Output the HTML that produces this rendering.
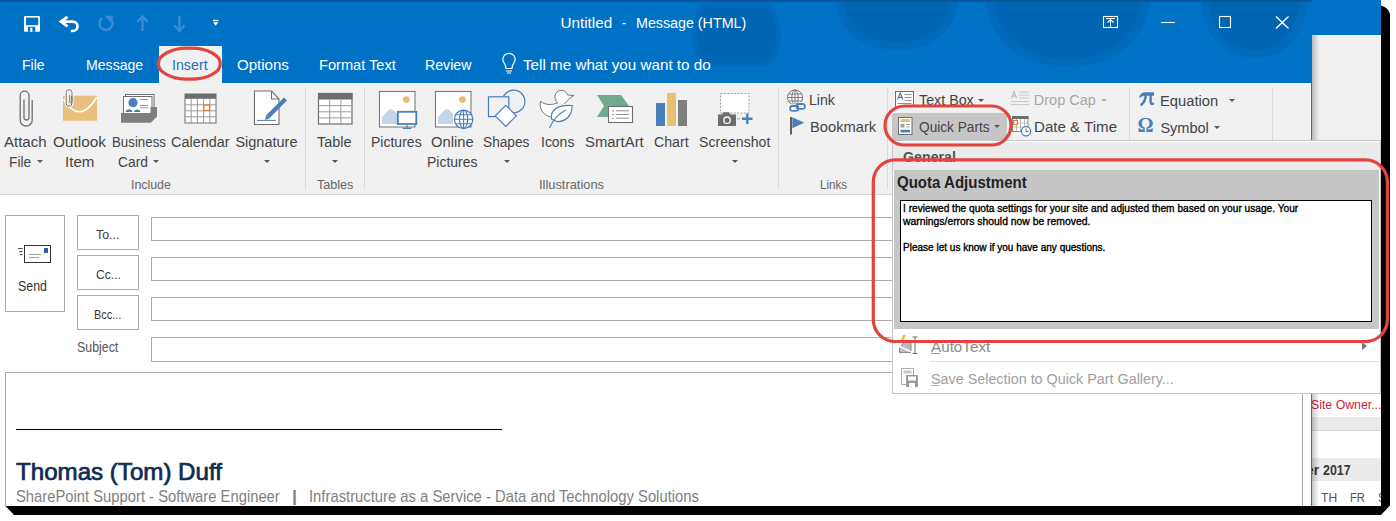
<!DOCTYPE html>
<html><head><meta charset="utf-8"><style>
html,body{margin:0;padding:0;width:1396px;height:521px;overflow:hidden;background:#fff}
.t{position:absolute;white-space:nowrap;font-family:"Liberation Sans",sans-serif;transform-origin:0 0}
.r{position:absolute;display:block}
</style></head><body>
<div class="r" style="left:0px;top:0px;width:1396px;height:521px;background:#fff"></div>
<svg class="r" style="left:0px;top:0px" width="1396" height="521" viewBox="0 0 1396 521"><path d="M1381 5.8 C1385 6.5 1388.5 9 1390 14 L1390 505.5 L1381 515 L14 515 L5.5 506 L1381 506 Z" fill="#000"/></svg>
<div class="r" style="left:1311px;top:0px;width:70px;height:506px;background:#fff"></div>
<div class="r" style="left:1311px;top:0px;width:70px;height:35px;background:#0072c6"></div>
<div class="r" style="left:1311px;top:35px;width:70px;height:106px;background:#f0f0f0"></div>
<div class="r" style="left:0px;top:0px;width:1312px;height:83px;background:#0072c6"></div>
<svg class="r" style="left:0px;top:0px" width="1311" height="83" viewBox="0 0 1311 83"><path d="M835 0 H959 C955.28 30.0 934.2 50 897.0 50 C859.8 50 838.72 30.0 835 0 Z" fill="#006abb"/><path d="M843 0 H951 C947.76 25.2 929.4 42 897.0 42 C864.6 42 846.24 25.2 843 0 Z" fill="#0065b3"/><path d="M985 0 H1150 C1145.05 40.199999999999996 1117.0 67 1067.5 67 C1018.0 67 989.95 40.199999999999996 985 0 Z" fill="#006abb"/><path d="M993 0 H1142 C1137.53 35.4 1112.2 59 1067.5 59 C1022.8 59 997.47 35.4 993 0 Z" fill="#0065b3"/><path d="M1201 0 H1308 C1304.79 34.8 1286.6 58 1254.5 58 C1222.4 58 1204.21 34.8 1201 0 Z" fill="#006abb"/><path d="M1209 0 H1300 C1297.27 30.0 1281.8 50 1254.5 50 C1227.2 50 1211.73 30.0 1209 0 Z" fill="#0065b3"/><path d="M705 3 H768 C776 8 781 20 781 35 C781 52 775 66 765 67 H708 C698 66 692 52 692 35 C692 20 697 8 705 3 Z" fill="#006abb"/><path d="M710 6 H764 C772 10 776 20 776 35 C776 50 771 62 762 63 H711 C702 62 697 50 697 35 C697 20 701 10 710 6 Z" fill="#0065b3"/></svg>
<div class="r" style="left:0px;top:0px;width:1312px;height:2px;background:#0b5698"></div>
<div class="t" style="left:560.50px;top:15.38px;font-size:15.26px;line-height:15.26px;color:#fff;">Untitled</div>
<div class="t" style="left:621.90px;top:15.38px;font-size:15.26px;line-height:15.26px;color:#fff;transform:scaleX(0.8067);">-</div>
<div class="t" style="left:635.70px;top:15.38px;font-size:15.26px;line-height:15.26px;color:#fff;transform:scaleX(0.9357);">Message (HTML)</div>
<div class="r" style="left:159px;top:46px;width:63px;height:37px;background:#f1f1f1"></div>
<div class="t" style="left:22.30px;top:57.06px;font-size:15.41px;line-height:15.41px;color:#fff;transform:scaleX(0.9146);">File</div>
<div class="t" style="left:85.50px;top:57.06px;font-size:15.41px;line-height:15.41px;color:#fff;transform:scaleX(0.9149);">Message</div>
<div class="t" style="left:236.80px;top:57.06px;font-size:15.41px;line-height:15.41px;color:#fff;transform:scaleX(0.9775);">Options</div>
<div class="t" style="left:318.60px;top:57.06px;font-size:15.41px;line-height:15.41px;color:#fff;transform:scaleX(0.9475);">Format Text</div>
<div class="t" style="left:425.20px;top:57.06px;font-size:15.41px;line-height:15.41px;color:#fff;transform:scaleX(0.9176);">Review</div>
<div class="t" style="left:522.60px;top:57.06px;font-size:15.41px;line-height:15.41px;color:#fff;transform:scaleX(0.9873);">Tell me what you want to do</div>
<div class="t" style="left:172.40px;top:57.06px;font-size:15.41px;line-height:15.41px;color:#1f6fc5;transform:scaleX(0.9239);">Insert</div>
<div class="r" style="left:0px;top:83px;width:1311px;height:111px;background:#f1f1f1"></div>
<div class="r" style="left:0px;top:194px;width:1311px;height:1px;background:#d5d5d5"></div>
<div class="r" style="left:1311px;top:83px;width:1px;height:423px;background:#1e78d0"></div>
<div class="r" style="left:305px;top:87px;width:1px;height:102px;background:#d9d9d9"></div>
<div class="r" style="left:364px;top:87px;width:1px;height:102px;background:#d9d9d9"></div>
<div class="r" style="left:778px;top:87px;width:1px;height:102px;background:#d9d9d9"></div>
<div class="r" style="left:887px;top:87px;width:1px;height:102px;background:#d9d9d9"></div>
<div class="r" style="left:1129px;top:87px;width:1px;height:102px;background:#d9d9d9"></div>
<div class="r" style="left:1272px;top:87px;width:1px;height:102px;background:#d9d9d9"></div>
<div class="t" style="left:4.10px;top:134.70px;font-size:14.53px;line-height:14.53px;color:#444;transform:scaleX(1.0338);">Attach</div>
<div class="t" style="left:53.40px;top:134.70px;font-size:14.53px;line-height:14.53px;color:#444;transform:scaleX(1.0575);">Outlook</div>
<div class="t" style="left:111.70px;top:134.70px;font-size:14.53px;line-height:14.53px;color:#444;transform:scaleX(0.9155);">Business</div>
<div class="t" style="left:171.10px;top:134.70px;font-size:14.53px;line-height:14.53px;color:#444;transform:scaleX(0.9935);">Calendar</div>
<div class="t" style="left:235.40px;top:134.70px;font-size:14.53px;line-height:14.53px;color:#444;">Signature</div>
<div class="t" style="left:317.30px;top:134.70px;font-size:14.53px;line-height:14.53px;color:#444;transform:scaleX(0.9927);">Table</div>
<div class="t" style="left:371.00px;top:134.70px;font-size:14.53px;line-height:14.53px;color:#444;transform:scaleX(0.9657);">Pictures</div>
<div class="t" style="left:431.30px;top:134.70px;font-size:14.53px;line-height:14.53px;color:#444;transform:scaleX(1.0162);">Online</div>
<div class="t" style="left:483.20px;top:134.70px;font-size:14.53px;line-height:14.53px;color:#444;transform:scaleX(0.9432);">Shapes</div>
<div class="t" style="left:541.20px;top:134.70px;font-size:14.53px;line-height:14.53px;color:#444;transform:scaleX(0.9615);">Icons</div>
<div class="t" style="left:585.00px;top:134.70px;font-size:14.53px;line-height:14.53px;color:#444;transform:scaleX(1.0255);">SmartArt</div>
<div class="t" style="left:654.20px;top:134.70px;font-size:14.53px;line-height:14.53px;color:#444;transform:scaleX(0.9736);">Chart</div>
<div class="t" style="left:699.40px;top:134.70px;font-size:14.53px;line-height:14.53px;color:#444;transform:scaleX(0.9710);">Screenshot</div>
<div class="t" style="left:9.20px;top:154.80px;font-size:14.53px;line-height:14.53px;color:#444;transform:scaleX(0.9524);">File</div>
<div class="t" style="left:65.00px;top:154.80px;font-size:14.53px;line-height:14.53px;color:#444;transform:scaleX(1.0400);">Item</div>
<div class="t" style="left:118.40px;top:154.80px;font-size:14.53px;line-height:14.53px;color:#444;transform:scaleX(0.9520);">Card</div>
<div class="t" style="left:427.40px;top:154.80px;font-size:14.53px;line-height:14.53px;color:#444;transform:scaleX(0.9619);">Pictures</div>
<svg class="r" style="left:36.5px;top:160.4px" width="6" height="3" viewBox="0 0 6 3"><path d="M0 0H6 L3.0 3Z" fill="#555"/></svg>
<svg class="r" style="left:153.0px;top:160.4px" width="6" height="3" viewBox="0 0 6 3"><path d="M0 0H6 L3.0 3Z" fill="#555"/></svg>
<svg class="r" style="left:264.0px;top:160.4px" width="6" height="3" viewBox="0 0 6 3"><path d="M0 0H6 L3.0 3Z" fill="#555"/></svg>
<svg class="r" style="left:332.0px;top:160.4px" width="6" height="3" viewBox="0 0 6 3"><path d="M0 0H6 L3.0 3Z" fill="#555"/></svg>
<svg class="r" style="left:504.0px;top:160.4px" width="6" height="3" viewBox="0 0 6 3"><path d="M0 0H6 L3.0 3Z" fill="#555"/></svg>
<svg class="r" style="left:732.0px;top:160.4px" width="6" height="3" viewBox="0 0 6 3"><path d="M0 0H6 L3.0 3Z" fill="#555"/></svg>
<div class="t" style="left:130.50px;top:178.00px;font-size:13.23px;line-height:13.23px;color:#666;transform:scaleX(0.9354);">Include</div>
<div class="t" style="left:316.60px;top:178.00px;font-size:13.23px;line-height:13.23px;color:#666;transform:scaleX(0.9519);">Tables</div>
<div class="t" style="left:538.50px;top:178.00px;font-size:13.23px;line-height:13.23px;color:#666;transform:scaleX(0.9716);">Illustrations</div>
<div class="t" style="left:819.60px;top:178.00px;font-size:13.23px;line-height:13.23px;color:#666;transform:scaleX(0.8746);">Links</div>
<div class="r" style="left:892px;top:113px;width:115px;height:28px;background:#c6c6c6;border-radius:3px"></div>
<div class="t" style="left:809.30px;top:93.10px;font-size:14.53px;line-height:14.53px;color:#444;transform:scaleX(0.9743);">Link</div>
<div class="t" style="left:809.70px;top:120.00px;font-size:14.53px;line-height:14.53px;color:#444;transform:scaleX(1.0128);">Bookmark</div>
<div class="t" style="left:918.80px;top:92.70px;font-size:14.53px;line-height:14.53px;color:#444;transform:scaleX(0.9831);">Text Box</div>
<svg class="r" style="left:978.0px;top:98.8px" width="6" height="3" viewBox="0 0 6 3"><path d="M0 0H6 L3.0 3Z" fill="#555"/></svg>
<div class="t" style="left:918.80px;top:119.80px;font-size:14.53px;line-height:14.53px;color:#444;transform:scaleX(0.9412);">Quick Parts</div>
<svg class="r" style="left:994.0px;top:124.9px" width="6" height="3" viewBox="0 0 6 3"><path d="M0 0H6 L3.0 3Z" fill="#555"/></svg>
<div class="t" style="left:1033.80px;top:92.70px;font-size:14.53px;line-height:14.53px;color:#a6a6a6;">Drop Cap</div>
<svg class="r" style="left:1101.0px;top:98.8px" width="6" height="3" viewBox="0 0 6 3"><path d="M0 0H6 L3.0 3Z" fill="#b0b0b0"/></svg>
<div class="t" style="left:1033.80px;top:119.80px;font-size:14.53px;line-height:14.53px;color:#444;transform:scaleX(1.0404);">Date &amp; Time</div>
<div class="t" style="left:1160.40px;top:93.70px;font-size:14.53px;line-height:14.53px;color:#444;transform:scaleX(1.0160);">Equation</div>
<svg class="r" style="left:1229.0px;top:98.8px" width="6" height="3" viewBox="0 0 6 3"><path d="M0 0H6 L3.0 3Z" fill="#555"/></svg>
<div class="t" style="left:1160.40px;top:120.60px;font-size:14.53px;line-height:14.53px;color:#444;">Symbol</div>
<svg class="r" style="left:1214.0px;top:125.6px" width="6" height="3" viewBox="0 0 6 3"><path d="M0 0H6 L3.0 3Z" fill="#555"/></svg>
<div class="r" style="left:5px;top:215px;width:60px;height:97px;background:#fff;border:1px solid #ababab;box-sizing:border-box"></div>
<div class="t" style="left:18.00px;top:279.00px;font-size:14.53px;line-height:14.53px;color:#333;transform:scaleX(0.8545);">Send</div>
<div class="r" style="left:77px;top:215px;width:62px;height:35px;background:#fff;border:1px solid #ababab;box-sizing:border-box"></div>
<div class="r" style="left:77px;top:255px;width:62px;height:35px;background:#fff;border:1px solid #ababab;box-sizing:border-box"></div>
<div class="r" style="left:77px;top:295px;width:62px;height:35px;background:#fff;border:1px solid #ababab;box-sizing:border-box"></div>
<div class="t" style="left:96.30px;top:227.90px;font-size:13.23px;line-height:13.23px;color:#3a3a3a;transform:scaleX(0.9361);">To...</div>
<div class="t" style="left:95.50px;top:267.90px;font-size:13.23px;line-height:13.23px;color:#3a3a3a;transform:scaleX(0.9193);">Cc...</div>
<div class="t" style="left:94.20px;top:307.70px;font-size:13.23px;line-height:13.23px;color:#3a3a3a;transform:scaleX(0.8256);">Bcc...</div>
<div class="t" style="left:77.30px;top:340.81px;font-size:13.81px;line-height:13.81px;color:#555;transform:scaleX(0.8968);">Subject</div>
<div class="r" style="left:151px;top:217px;width:1160px;height:24px;border:1px solid #ababab;box-sizing:border-box;background:#fff"></div>
<div class="r" style="left:151px;top:257px;width:1160px;height:24px;border:1px solid #ababab;box-sizing:border-box;background:#fff"></div>
<div class="r" style="left:151px;top:297px;width:1160px;height:24px;border:1px solid #ababab;box-sizing:border-box;background:#fff"></div>
<div class="r" style="left:151px;top:337px;width:1160px;height:25px;border:1px solid #ababab;box-sizing:border-box;background:#fff"></div>
<div class="r" style="left:5px;top:372px;width:1298px;height:134px;border:1px solid #ababab;border-bottom:none;box-sizing:border-box;background:#fff"></div>
<div class="r" style="left:16px;top:429px;width:486px;height:1px;background:#000"></div>
<div class="t" style="left:16.00px;top:460.81px;font-size:23.26px;line-height:23.26px;color:#0f2d52;transform:scaleX(1.0371);-webkit-text-stroke:0.7px #0f2d52;">Thomas (Tom) Duff</div>
<div class="t" style="left:16.00px;top:489.17px;font-size:15.99px;line-height:15.99px;color:#7f7f7f;transform:scaleX(0.9247);">SharePoint Support - Software Engineer</div>
<div class="t" style="left:292.00px;top:489.17px;font-size:15.99px;line-height:15.99px;color:#7f7f7f;font-weight:bold;transform:scaleX(1.1169);">|</div>
<div class="t" style="left:309.00px;top:489.17px;font-size:15.99px;line-height:15.99px;color:#7f7f7f;transform:scaleX(0.9265);">Infrastructure as a Service - Data and Technology Solutions</div>
<div class="r" style="left:0;top:0;width:1396px;height:521px;clip-path:inset(0px 15px 15px 1312px)">
<div class="r" style="left:1311px;top:417px;width:70px;height:14px;background:#ebebeb;border-bottom:1px solid #d6d6d6;box-sizing:border-box"></div>
<div class="r" style="left:1311px;top:458px;width:70px;height:23px;background:#ebebeb"></div>
<div class="t" style="left:1310.50px;top:397.93px;font-size:13.66px;line-height:13.66px;color:#c81f3c;transform:scaleX(0.9013);">Site Owner...</div>
<div class="t" style="left:1306.00px;top:463.34px;font-size:14.24px;line-height:14.24px;color:#3a3a3a;font-weight:bold;transform:scaleX(0.9658);">er</div>
<div class="t" style="left:1323.30px;top:463.34px;font-size:14.24px;line-height:14.24px;color:#3a3a3a;font-weight:bold;transform:scaleX(0.8740);">2017</div>
<div class="t" style="left:1321.40px;top:491.23px;font-size:13.08px;line-height:13.08px;color:#555;transform:scaleX(0.9233);">TH</div>
<div class="t" style="left:1350.40px;top:491.23px;font-size:13.08px;line-height:13.08px;color:#555;transform:scaleX(0.8602);">FR</div>
<div class="t" style="left:1377.60px;top:491.23px;font-size:13.08px;line-height:13.08px;color:#555;transform:scaleX(0.8481);">S</div>
</div>
<div class="r" style="left:1312px;top:35px;width:7px;height:471px;background:linear-gradient(90deg,rgba(0,0,0,.22),rgba(0,0,0,0))"></div>
<div class="r" style="left:1311px;top:394px;width:1px;height:112px;background:#1e78d0"></div>
<div class="r" style="left:892px;top:140px;width:489px;height:254px;background:#fff;border:1px solid #c6c6c6;box-sizing:border-box"></div>
<div class="r" style="left:893px;top:142px;width:487px;height:28px;background:#ebebeb"></div>
<div class="t" style="left:903.30px;top:150.81px;font-size:13.81px;line-height:13.81px;color:#4e5561;font-weight:bold;transform:scaleX(1.0307);">General</div>
<div class="r" style="left:894px;top:170px;width:485px;height:159px;background:#c6c6c6"></div>
<div class="t" style="left:897.00px;top:174.87px;font-size:15.99px;line-height:15.99px;color:#222;font-weight:bold;transform:scaleX(0.9401);">Quota Adjustment</div>
<div class="r" style="left:900px;top:200px;width:472px;height:122px;background:#fff;border:1px solid #000;box-sizing:border-box"></div>
<div class="t" style="left:902.50px;top:204.16px;font-size:10.32px;line-height:10.32px;color:#000;transform:scaleX(0.9849);-webkit-text-stroke:0.35px #000;">I reviewed the quota settings for your site and adjusted them based on your usage. Your</div>
<div class="t" style="left:902.52px;top:216.56px;font-size:10.32px;line-height:10.32px;color:#000;transform:scaleX(1.0056);-webkit-text-stroke:0.35px #000;">warnings/errors should now be removed.</div>
<div class="t" style="left:902.50px;top:242.56px;font-size:10.32px;line-height:10.32px;color:#000;transform:scaleX(0.9724);-webkit-text-stroke:0.35px #000;">Please let us know if you have any questions.</div>
<div class="t" style="left:931.40px;top:340.81px;font-size:13.81px;line-height:13.81px;color:#8a8a8a;transform:scaleX(1.1037);">AutoText</div>
<div class="r" style="left:930px;top:361px;width:449px;height:1px;background:#e1e1e1"></div>
<div class="r" style="left:931px;top:353px;width:9px;height:1px;background:#9a9a9a"></div>
<div class="r" style="left:931px;top:385px;width:8px;height:1px;background:#b0b0b0"></div>
<div class="t" style="left:931.40px;top:373.31px;font-size:13.81px;line-height:13.81px;color:#a0a0a0;transform:scaleX(1.0393);">Save Selection to Quick Part Gallery...</div>
<svg class="r" style="left:1362px;top:342px" width="5" height="8" viewBox="0 0 5 8"><path d="M0 0L5 4L0 8Z" fill="#777"/></svg>
<svg class="r" style="left:0px;top:0px" width="1396" height="521" viewBox="0 0 1396 521">
<g id="qat">
<rect x="24" y="16" width="16" height="15.8" rx="1.2" fill="#fff"/>
<rect x="26" y="17.6" width="12.2" height="7.6" fill="#0072c6"/>
<rect x="28" y="26.8" width="7.2" height="5" fill="#0072c6"/>
<rect x="30.2" y="27.8" width="2.2" height="4" fill="#fff"/>
<path d="M62 21.6 H72.8 A4.7 4.7 0 0 1 72.8 31 H70.8" stroke="#fff" stroke-width="2.6" fill="none"/>
<path d="M67.5 16.8 L61 21.6 L67.5 26.4" stroke="#fff" stroke-width="2.8" fill="none" stroke-linejoin="miter"/>
<path d="M110.5 18.6 A6.6 6.6 0 1 1 102 18.2" stroke="#3a8ad6" stroke-width="2.4" fill="none"/>
<path d="M104.5 15.5 L113.6 16.2 L110.4 22.6 Z" fill="#3a8ad6"/>
<path d="M142.5 17.5 V31 M137.3 22 L142.5 16.4 L147.7 22" stroke="#3a8ad6" stroke-width="2.4" fill="none"/>
<path d="M179.4 16 V29.6 M174.2 25.2 L179.4 30.8 L184.6 25.2" stroke="#3a8ad6" stroke-width="2.4" fill="none"/>
<rect x="213" y="19.8" width="5.3" height="1.3" fill="#fff"/>
<path d="M213 22.2 H218.3 L215.65 25.8 Z" fill="#fff"/>
</g>
<g id="titlebtns" stroke="#fff" fill="none" stroke-width="1.1">
<rect x="1103.5" y="16.5" width="14" height="11"/>
<path d="M1110.5 27.5 V19.5 M1107.5 22.5 L1110.5 19.5 L1113.5 22.5 M1106 18.5 H1115"/>
<path d="M1161 22.5 H1175"/>
<rect x="1219.5" y="16.5" width="11" height="11"/>
<path d="M1276 16.5 L1288.5 28.5 M1288.5 16.5 L1276 28.5" stroke-width="1.3"/>
</g>
<g id="bulb" stroke="#fff" fill="none" stroke-width="1.2">
<path d="M506 68.5 C506 64 502.8 62.5 502.8 59.5 A6.2 6.2 0 0 1 515.2 59.5 C515.2 62.5 512 64 512 68.5 Z"/>
<path d="M506 71 H512 M507 73 H511"/>
</g>
<g id="include">
<path d="M32.2 100 V120 A6 6 0 0 1 20.2 120 V95.5 A4.4 4.4 0 0 1 29 95.5 V117.5 A2.5 2.5 0 0 1 24 117.5 V99.5" stroke="#6f6f6f" stroke-width="1.3" fill="none"/>
<rect x="63" y="95.7" width="34" height="25.1" fill="#e8bf7e"/>
<path d="M63.5 99.5 Q80 125 96.5 97.5" stroke="#fff" stroke-width="1.6" fill="none"/>
<path d="M71.8 96 V103.5 A2.8 2.8 0 0 1 66.2 103.5 V92.5 A2.9 2.9 0 0 1 72 92.5 V102 A1.1 1.1 0 0 1 69.8 102 V95" stroke="#fff" stroke-width="3" fill="none"/>
<path d="M71.8 96 V103.5 A2.8 2.8 0 0 1 66.2 103.5 V92.5 A2.9 2.9 0 0 1 72 92.5 V102 A1.1 1.1 0 0 1 69.8 102 V95" stroke="#6f6f6f" stroke-width="1" fill="none"/>
<rect x="125.5" y="94.5" width="28.5" height="18" fill="#fff" stroke="#6f6f6f" stroke-width="1"/>
<rect x="123.5" y="96.5" width="28.5" height="18" fill="#fff" stroke="#6f6f6f" stroke-width="1"/>
<circle cx="133" cy="102.7" r="4.6" fill="#4a7ebb"/>
<path d="M125.5 112 A3.6 3.6 0 0 1 132.5 112 Z M133.8 112 A3.6 3.6 0 0 1 140.6 112 Z" fill="#4a7ebb"/>
<path d="M140 99.5 H148 M140 105.5 H148 M140 107.8 H148" stroke="#888" stroke-width="0.9"/>
<path d="M121 113 H150.5 V107 H157 V116.5 L150.8 122.8 H121 Z" fill="#7f7f7f"/>
<rect x="185" y="94" width="31" height="29" fill="#fff" stroke="#7a7a7a" stroke-width="1.1"/>
<rect x="185" y="94" width="31" height="4.8" fill="#6d6d6d"/>
<path d="M191.2 98.8 V123 M197.4 98.8 V123 M203.6 98.8 V123 M209.8 98.8 V123 M185 104.8 H216 M185 110.8 H216 M185 116.8 H216" stroke="#9a9a9a" stroke-width="1"/>
<rect x="203.9" y="105.1" width="5.6" height="5.4" fill="#fff" stroke="#e07b27" stroke-width="1.2"/>
<path d="M254.5 91 H271.5 L279 99 V124.5 H254.5 Z" fill="#fff" stroke="#6f6f6f" stroke-width="1.1"/>
<path d="M271.5 91 V99 H279" fill="none" stroke="#6f6f6f" stroke-width="1.1"/>
<path d="M268 116.5 L285.5 99" stroke="#4a7ebb" stroke-width="4.2"/>
<path d="M265 120 L266.2 114.8 L269.8 118.6 Z" fill="#4a7ebb"/>
<path d="M257 120.4 H276" stroke="#4a7ebb" stroke-width="1"/>
</g>
<g id="tables">
<rect x="318.5" y="93.5" width="33.5" height="30.5" fill="#fff" stroke="#6f6f6f" stroke-width="1.2"/>
<rect x="318" y="93" width="34.5" height="6.5" fill="#6d6d6d"/>
<path d="M329.7 99.5 V124 M340.9 99.5 V124 M318.5 105.6 H352 M318.5 111.8 H352 M318.5 117.9 H352" stroke="#9a9a9a" stroke-width="1"/>
</g>
<g id="illus">
<rect x="379.5" y="91.5" width="35.5" height="35.5" fill="#fff" stroke="#7a7a7a" stroke-width="1.1"/>
<circle cx="406.4" cy="99.6" r="3.3" fill="#e9bb6c"/>
<path d="M382 124 V117 L389 109.5 L392.5 109.5 L397 114 V124 Z" fill="#c3d5ea"/>
<rect x="397.8" y="111.8" width="18.5" height="12.2" fill="#fff" stroke="#4a7ebb" stroke-width="1.8"/>
<path d="M407 124 V128 M402.8 128.4 H411.2" stroke="#4a7ebb" stroke-width="1.1"/>
<rect x="435.5" y="91.5" width="35.5" height="35.5" fill="#fff" stroke="#7a7a7a" stroke-width="1.1"/>
<circle cx="462.5" cy="99.6" r="3.3" fill="#e9bb6c"/>
<path d="M438 124 V117 L445 109.5 L448.5 109.5 L453 114 V124 Z" fill="#c3d5ea"/>
<circle cx="463.6" cy="119.3" r="9.2" fill="#fff" stroke="#4a7ebb" stroke-width="1.3"/>
<ellipse cx="463.6" cy="119.3" rx="4" ry="9.2" fill="none" stroke="#4a7ebb" stroke-width="1.1"/>
<path d="M463.6 110 V128.5 M454.5 119.3 H472.7 M455.8 114.8 H471.4 M455.8 123.8 H471.4" stroke="#4a7ebb" stroke-width="1.1"/>
<circle cx="513.6" cy="101.5" r="11.3" fill="none" stroke="#4a7ebb" stroke-width="1.2"/>
<rect x="488.5" y="96.8" width="20.3" height="19.8" fill="#f1f1f1" stroke="#4a7ebb" stroke-width="1.2"/>
<path d="M505.8 105.3 L516.3 115.8 L505.8 126.3 L495.3 115.8 Z" fill="#fff" stroke="#4a7ebb" stroke-width="1.2"/>
<path d="M558 103 C553.5 100.5 553.5 91 560.8 90.3 C564.5 90 566.8 92.5 567.5 95 L573.8 95.5 L568.2 99.5 C567.5 101 566 102.5 564 103.5 M557.5 103 C551 105.5 545 105 540.5 101.3 C539 108 542.5 115 550.5 116.8" stroke="#777" stroke-width="1" fill="#fff"/>
<path d="M551.5 119 C550 110 558 104.5 572 105.5 C572.5 115 566 122 557 121.5 Z" fill="#fff" stroke="#4a7ebb" stroke-width="1.2"/>
<path d="M549.5 128 C553 120 558 114 566 110" stroke="#4a7ebb" stroke-width="1.1" fill="none"/>
<path d="M597 95 H621 L629 106 L621 117 H597 L604 106 Z" fill="#72a98f"/>
<rect x="608.5" y="106.5" width="24" height="16" fill="#fff" stroke="#6f6f6f" stroke-width="1.1"/>
<path d="M612 110.8 H614 M612 114.5 H614 M612 118.2 H614 M616 110.8 H629 M616 114.5 H629 M616 118.2 H629" stroke="#888" stroke-width="0.9"/>
<rect x="656" y="103" width="9" height="23" fill="#4a7ebb"/>
<rect x="667" y="93" width="9" height="33" fill="#e9c16e"/>
<rect x="678" y="100" width="9" height="26" fill="#7f7f7f"/>
<rect x="720.5" y="93.5" width="28.5" height="19.5" fill="#fff" stroke="#999" stroke-width="0.9" stroke-dasharray="2 1.4"/>
<path d="M718 114.5 H722 L723.5 112.3 H729 L730.5 114.5 H736 V126 H718 Z" fill="#6d6d6d"/>
<circle cx="727" cy="120.2" r="3.2" fill="none" stroke="#fff" stroke-width="1.3"/>
<path d="M737 118.8 H740" stroke="#999" stroke-width="0.9"/>
<path d="M742 118.8 H752.5 M747.3 113.5 V124" stroke="#4a7ebb" stroke-width="2.4"/>
</g>
<g id="links">
<circle cx="795" cy="97.5" r="7.5" fill="#fff" stroke="#6f6f6f" stroke-width="1"/>
<path d="M795 90 V105 M787.5 97.5 H802.5 M788.5 94 H801.5 M788.5 101 H801.5" stroke="#6f6f6f" stroke-width="0.9"/>
<ellipse cx="795" cy="97.5" rx="3.2" ry="7.5" fill="none" stroke="#6f6f6f" stroke-width="0.9"/>
<path d="M792.5 106 H796 M799 104 H802.5 A2.4 2.4 0 0 1 802.5 108.8 H799 M796 106 A2.4 2.4 0 0 1 796 110.8 H792.5 A2.4 2.4 0 0 1 792.5 106" stroke="#fff" stroke-width="3.6" fill="none"/>
<path d="M799 104 H802.5 A2.4 2.4 0 0 1 802.5 108.8 H799 A2.4 2.4 0 0 1 799 104 Z M792.5 106 H796 A2.4 2.4 0 0 1 796 110.8 H792.5 A2.4 2.4 0 0 1 792.5 106 Z" stroke="#4a7ebb" stroke-width="1.8" fill="none"/>
<path d="M791 117 V134.6" stroke="#555" stroke-width="1.9"/>
<path d="M792.3 117.3 L804.3 122.7 L792.3 128.2 Z" fill="#4a7ebb"/>
</g>
<g id="text">
<rect x="895.5" y="91.5" width="18" height="15" fill="#fff" stroke="#6f6f6f" stroke-width="1"/>
<path d="M897.5 99.5 L900.2 93 L902.9 99.5 M898.5 97.3 H901.9" stroke="#4a7ebb" stroke-width="1.2" fill="none"/>
<path d="M904.5 94.5 H911.5 M904.5 97.5 H911.5 M904.5 100.5 H911.5 M897.5 103.5 H911.5" stroke="#888" stroke-width="0.9"/>
<rect x="898.5" y="117.5" width="13.5" height="17" fill="#fff" stroke="#6f6f6f" stroke-width="1"/>
<rect x="900.5" y="119.2" width="9.5" height="2.8" fill="#e9c16e"/>
<rect x="900.5" y="124" width="4" height="3.5" fill="#a0a0a0"/>
<path d="M906 124.5 H910 M906 127 H910" stroke="#999" stroke-width="0.8"/>
<rect x="900.5" y="129.8" width="9.5" height="2.6" fill="#4a7ebb"/>
<path d="M1011.5 98 L1014 91.5 L1016.5 98 M1012.3 96 H1015.7" stroke="#b8b8b8" stroke-width="1.1" fill="none"/>
<path d="M1019 92 H1029 M1019 95 H1029 M1019 98 H1029 M1011 101.5 H1029 M1011 104.5 H1029" stroke="#c4c4c4" stroke-width="0.9"/>
<rect x="1012.5" y="116.5" width="15.5" height="15" fill="#fff" stroke="#888" stroke-width="1"/>
<rect x="1012" y="116" width="16.5" height="3" fill="#6d6d6d"/>
<path d="M1016.5 119 V131.5 M1020.5 119 V131.5 M1024.5 119 V131.5 M1012.5 123 H1028 M1012.5 127 H1028" stroke="#aaa" stroke-width="0.8"/>
<rect x="1013.5" y="120.5" width="4" height="4" fill="#fff" stroke="#e07b27" stroke-width="1.1"/>
<circle cx="1026" cy="131.3" r="4.6" fill="#fff" stroke="#4a7ebb" stroke-width="1.2"/>
<path d="M1026 128.5 V131.6 H1028.5" stroke="#555" stroke-width="0.9" fill="none"/>
</g>
<g id="pi" fill="#4a7ebb">
<path d="M1139 97.5 C1140 93.8 1142 92.2 1145.5 92.2 H1154 V95.8 H1145.5 C1143.3 95.8 1141.8 96.2 1140.3 97.8 Z"/>
<path d="M1145.8 95 C1145.5 99.5 1144 102.5 1141.6 104.6" stroke="#4a7ebb" stroke-width="2.6" fill="none" stroke-linecap="round"/>
<path d="M1150.6 95 V101.8 C1150.6 104 1152.2 104.6 1153.8 103.2" stroke="#4a7ebb" stroke-width="2.4" fill="none"/>
</g>
<g id="send">
<rect x="24.5" y="245.5" width="26" height="17" fill="#fff" stroke="#333" stroke-width="1"/>
<rect x="44" y="248" width="4" height="5" fill="#2b5fa0"/>
<path d="M29 254.5 H41 M29 257.5 H39" stroke="#999" stroke-width="0.9"/>
<path d="M18 248.6 H22.7 M19.3 251.6 H22.7 M20 254.6 H22.7" stroke="#444" stroke-width="1"/>
</g>
<g id="dd">
<path d="M903 335 L900.5 342 L903.5 342 L901 348 L906.5 340 L903.5 340 L906 335 Z" fill="#f2b73b"/>
<path d="M899.5 347.5 V352.5 H911 M901 346 L904 342.5 H911 V351" stroke="#888" stroke-width="1" fill="#bdbdbd"/>
<path d="M912.5 337 H917.5 M915 337 V353.5 M912.5 353.5 H917.5" stroke="#666" stroke-width="1" fill="none"/>
<rect x="901.5" y="368.5" width="12" height="16" fill="#fff" stroke="#b0b0b0" stroke-width="1"/>
<rect x="903.5" y="370.5" width="8" height="3" fill="#c8c8c8"/>
<rect x="906" y="375" width="12" height="12" fill="#9a9a9a"/>
<rect x="908" y="376.5" width="8" height="4" fill="#fff"/>
<rect x="909" y="383" width="6" height="4" fill="#fff"/>
</g>
</svg>
<div class="t" style="left:1137.5px;top:114.5px;font:bold 20px/20px 'Liberation Serif',serif;color:#4a7ebb">&#937;</div>
<svg class="r" style="left:0px;top:0px" width="1396" height="521" viewBox="0 0 1396 521"><g fill="none" stroke="#e4443d" stroke-width="3.2"><rect x="158.3" y="48.2" width="62" height="31" rx="29" ry="15.5"/><rect x="885" y="106" width="126" height="39" rx="19.5"/><rect x="873.3" y="159.9" width="514.1" height="181.6" rx="22"/></g></svg>
</body></html>
